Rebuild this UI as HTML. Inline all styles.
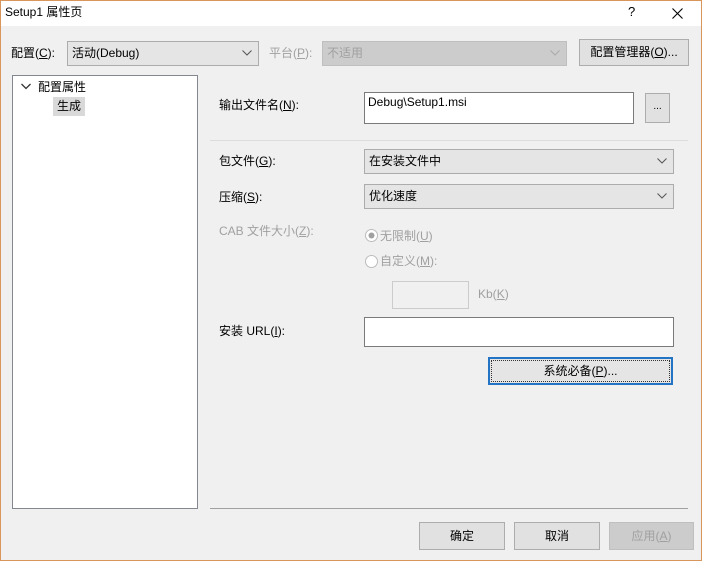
<!DOCTYPE html><html><head><meta charset="utf-8"><style>
*{margin:0;padding:0;box-sizing:border-box}
body{width:702px;height:561px;overflow:hidden;background:#f0f0f0;font-family:"Liberation Sans","Noto Sans CJK SC",sans-serif;font-size:12px;color:#000;position:relative}
.a{position:absolute;white-space:nowrap}
.win{position:absolute;left:0;top:0;width:702px;height:561px;border:1px solid #d8955c;pointer-events:none}
.t{line-height:16px}
.cb{position:absolute;background:#e5e5e5;border:1px solid #acacac;padding-left:4px;line-height:22px}
.cb svg{position:absolute;right:6px;top:8px}
.btn{position:absolute;background:#e1e1e1;border:1px solid #adadad;text-align:center}
.tb{position:absolute;background:#fff;border:1px solid #7a7a7a;padding:2px 3px}
.g{color:#a0a0a0}
u{text-decoration:underline}
</style></head><body>
<div class="a" style="left:0;top:0;width:702px;height:26px;background:#fff"></div>
<div class="a t" style="left:5px;top:4px">Setup1 属性页</div>
<div class="a t" style="left:628px;top:4px;font-size:13px">?</div>
<svg class="a" style="left:672px;top:8px" width="11" height="11"><path d="M0.5 0.5L10.5 10.5M10.5 0.5L0.5 10.5" stroke="#000" stroke-width="1.1"/></svg>

<div class="a t" style="left:11px;top:45px">配置(<u>C</u>):</div>
<div class="cb" style="left:67px;top:41px;width:192px;height:25px">活动(Debug)<svg width="10" height="6"><path d="M0.5 0.5L5 5L9.5 0.5" stroke="#555" fill="none"/></svg></div>
<div class="a t g" style="left:269px;top:45px">平台(<u>P</u>):</div>
<div class="cb g" style="left:322px;top:41px;width:245px;height:25px;background:#ccc;border-color:#bfbfbf">不适用<svg width="10" height="6"><path d="M0.5 0.5L5 5L9.5 0.5" stroke="#aaa" fill="none"/></svg></div>
<div class="btn" style="left:579px;top:39px;width:110px;height:27px;line-height:25px">配置管理器(<u>O</u>)...</div>

<div class="a" style="left:12px;top:75px;width:186px;height:434px;background:#fff;border:1px solid #828790"></div>
<svg class="a" style="left:21px;top:83px" width="10" height="7"><path d="M0.5 1L5 5.5L9.5 1" stroke="#333" stroke-width="1.3" fill="none"/></svg>
<div class="a t" style="left:38px;top:79px">配置属性</div>
<div class="a t" style="left:53px;top:97px;width:32px;height:19px;background:#d9d9d9;padding:1px 4px">生成</div>

<div class="a t" style="left:219px;top:97px">输出文件名(<u>N</u>):</div>
<div class="tb" style="left:364px;top:92px;width:270px;height:32px">Debug\Setup1.msi</div>
<div class="btn" style="left:645px;top:93px;width:25px;height:30px;line-height:26px;font-size:10px">...</div>
<div class="a" style="left:210px;top:140px;width:478px;height:1px;background:#dcdcdc"></div>

<div class="a t" style="left:219px;top:153px">包文件(<u>G</u>):</div>
<div class="cb" style="left:364px;top:149px;width:310px;height:25px">在安装文件中<svg width="10" height="6"><path d="M0.5 0.5L5 5L9.5 0.5" stroke="#555" fill="none"/></svg></div>
<div class="a t" style="left:219px;top:189px">压缩(<u>S</u>):</div>
<div class="cb" style="left:364px;top:184px;width:310px;height:25px">优化速度<svg width="10" height="6"><path d="M0.5 0.5L5 5L9.5 0.5" stroke="#555" fill="none"/></svg></div>

<div class="a t g" style="left:219px;top:223px">CAB 文件大小(<u>Z</u>):</div>
<svg class="a" style="left:365px;top:229px" width="13" height="13"><circle cx="6.5" cy="6.5" r="6" fill="#fff" stroke="#bcbcbc"/><circle cx="6.5" cy="6.5" r="3" fill="#a0a0a0"/></svg>
<div class="a t g" style="left:380px;top:228px">无限制(<u>U</u>)</div>
<svg class="a" style="left:365px;top:255px" width="13" height="13"><circle cx="6.5" cy="6.5" r="6" fill="#fff" stroke="#bcbcbc"/></svg>
<div class="a t g" style="left:380px;top:253px">自定义(<u>M</u>):</div>
<div class="a" style="left:392px;top:281px;width:77px;height:28px;background:#f0f0f0;border:1px solid #ccc"></div>
<div class="a t g" style="left:478px;top:286px">Kb(<u>K</u>)</div>

<div class="a t" style="left:219px;top:323px">安装 URL(<u>I</u>):</div>
<div class="tb" style="left:364px;top:317px;width:310px;height:30px"></div>
<div class="btn" style="left:488px;top:357px;width:185px;height:28px;line-height:24px;border:2px solid #2474c5;background:#e5e5e5"><span style="display:block;border:1px dotted #333;margin:1px;line-height:20px">系统必备(<u>P</u>)...</span></div>

<div class="a" style="left:210px;top:508px;width:478px;height:1px;background:#a0a0a0"></div>
<div class="btn" style="left:419px;top:522px;width:86px;height:28px;line-height:26px">确定</div>
<div class="btn" style="left:514px;top:522px;width:86px;height:28px;line-height:26px">取消</div>
<div class="btn g" style="left:609px;top:522px;width:85px;height:28px;line-height:26px;background:#ccc;border-color:#bfbfbf">应用(<u>A</u>)</div>
<div class="win"></div>
</body></html>
